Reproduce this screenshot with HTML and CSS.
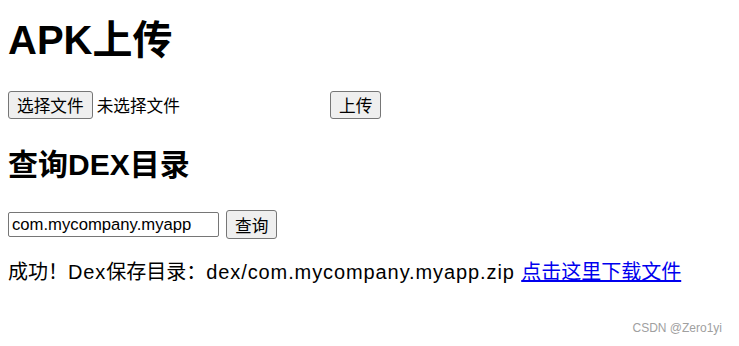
FILE: index.html
```html
<!DOCTYPE html>
<html lang="zh-CN">
<head>
<meta charset="utf-8">
<title>APK上传</title>
<link rel="stylesheet" href="styles.css">
</head>
<body>
<div class="page">
  <h1 class="title">APK上传</h1>
  <form class="row upload-row">
    <label class="file-picker">
      <span class="btn">选择文件</span>
      <span class="file-name">未选择文件</span>
    </label>
    <button type="button" class="btn">上传</button>
  </form>
  <h2 class="subtitle">查询DEX目录</h2>
  <form class="row query-row">
    <input class="text-input" type="text" value="com.mycompany.myapp">
    <button type="button" class="btn btn-query">查询</button>
  </form>
  <p class="result">成功！<span class="latin">Dex</span>保存目录：<span class="latin">dex/com.mycompany.myapp.zip </span><a href="#" class="link">点击这里下载文件</a></p>
</div>
<div class="watermark">CSDN @Zero1yi</div>
</body>
</html>
```
FILE: styles.css
```css
html, body {
  margin: 0;
  padding: 0;
  background: #fff;
}
body {
  position: relative;
  width: 739px;
  height: 346px;
  overflow: hidden;
  font-family: "Liberation Sans", "Noto Sans CJK SC", sans-serif;
  color: #000;
}
.page {
  padding: 0 8px;
}
.title {
  margin: 17px 0 0;
  font-size: 40px;
  line-height: 46px;
  font-weight: bold;
}
.row {
  display: flex;
  align-items: center;
  margin: 0;
}
.upload-row {
  margin-top: 28px;
  height: 28px;
}
.file-picker {
  display: flex;
  align-items: center;
  width: 322px;
}
.file-name {
  margin-left: 4px;
  font-size: 16.67px;
}
.btn {
  box-sizing: border-box;
  display: inline-flex;
  align-items: center;
  justify-content: center;
  height: 28px;
  padding: 0 8px;
  border: 1px solid #767676;
  border-radius: 3px;
  background: #efefef;
  font-family: inherit;
  font-size: 16.67px;
  color: #000;
}
.subtitle {
  margin: 28px 0 0;
  font-size: 30px;
  line-height: 35px;
  font-weight: bold;
}
.query-row {
  margin-top: 28px;
  height: 29px;
}
.text-input {
  box-sizing: border-box;
  width: 211px;
  height: 25px;
  margin: 0;
  padding: 0 3px;
  border: 1px solid #767676;
  border-radius: 2px;
  font-family: inherit;
  font-size: 16.67px;
  color: #000;
}
.btn-query {
  height: 29px;
  margin-left: 7px;
}
.result {
  margin: 22px 0 0;
  font-size: 20px;
  line-height: 23px;
}
.latin {
  letter-spacing: 0.9px;
}
.link {
  color: #0000ee;
  text-decoration: underline;
}
.watermark {
  position: absolute;
  right: 17px;
  top: 321px;
  font-size: 12px;
  line-height: 14px;
  color: #a0a0a0;
}
```
